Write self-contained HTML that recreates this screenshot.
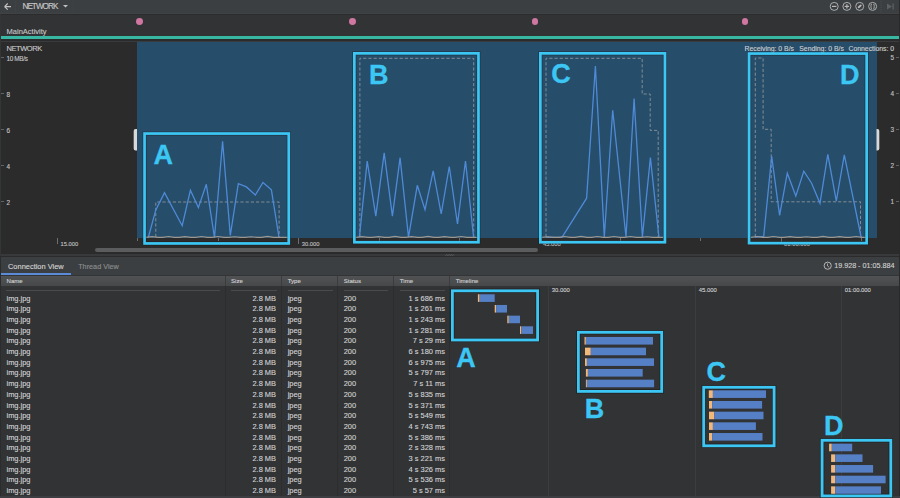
<!DOCTYPE html>
<html><head><meta charset="utf-8"><style>
*{margin:0;padding:0;box-sizing:border-box}
html,body{width:900px;height:498px;overflow:hidden;background:#2b2b2c;font-family:"Liberation Sans",sans-serif;color:#bbbbbb}
.a{position:absolute}
.t{position:absolute;white-space:nowrap;line-height:1;-webkit-text-stroke:0.12px currentColor}
</style></head><body>

<div class="a" style="left:0;top:0;width:900px;height:13.8px;background:#3c3f41"></div>
<div class="a" style="left:0;top:13px;width:900px;height:0.8px;background:#404346"></div>
<div class="a" style="left:0;top:14.8px;width:900px;height:21.2px;background:#313335"></div>
<div class="a" style="left:1px;top:35.5px;width:899px;height:3.2px;background:#38b8a2"></div>
<div class="a" style="left:0;top:38.7px;width:900px;height:3.3px;background:#2a2b2c"></div>
<div class="a" style="left:0;top:41px;width:900px;height:1px;background:#3a3b3c"></div>
<div class="a" style="left:0;top:42px;width:900px;height:196px;background:#2b2b2c"></div>
<div class="a" style="left:137px;top:42px;width:740px;height:196px;background:#264d69"></div>
<div class="a" style="left:0;top:238px;width:900px;height:17px;background:#2b2b2c"></div>
<div class="a" style="left:95px;top:248px;width:443px;height:4.2px;border-radius:2px;background:#5b5c5e"></div>
<div class="a" style="left:0;top:254.2px;width:900px;height:2.3px;background:#37393b"></div>
<div class="a" style="left:0;top:256.5px;width:900px;height:19.3px;background:#3c3f41"></div>
<div class="a" style="left:1px;top:273.3px;width:70px;height:1.8px;background:#5b8ad6"></div>
<div class="a" style="left:0;top:275px;width:900px;height:1px;background:#323436"></div>
<div class="a" style="left:0;top:276px;width:900px;height:9.8px;background:linear-gradient(#505254,#46484a)"></div>
<div class="a" style="left:0;top:285.8px;width:900px;height:1.2px;background:#2c2d2f"></div>
<div class="a" style="left:0;top:286.2px;width:900px;height:212px;background:#313335"></div>
<div class="a" style="left:224.8px;top:276px;width:1px;height:10px;background:#3a3c3e"></div>
<div class="a" style="left:224.8px;top:286px;width:1px;height:212px;background:#2c2d2f"></div>
<div class="a" style="left:281.2px;top:276px;width:1px;height:10px;background:#3a3c3e"></div>
<div class="a" style="left:281.2px;top:286px;width:1px;height:212px;background:#2c2d2f"></div>
<div class="a" style="left:337.0px;top:276px;width:1px;height:10px;background:#3a3c3e"></div>
<div class="a" style="left:337.0px;top:286px;width:1px;height:212px;background:#2c2d2f"></div>
<div class="a" style="left:393.1px;top:276px;width:1px;height:10px;background:#3a3c3e"></div>
<div class="a" style="left:393.1px;top:286px;width:1px;height:212px;background:#2c2d2f"></div>
<div class="a" style="left:449.2px;top:276px;width:1px;height:10px;background:#3a3c3e"></div>
<div class="a" style="left:449.2px;top:286px;width:1px;height:212px;background:#2c2d2f"></div>
<svg class="a" style="left:440px;top:253px" width="20" height="4"><path d="M5.5 2.8 L6.7 1.3 L7.9 2.8 L9.1 1.3 L10.3 2.8 L11.5 1.3 L12.7 2.8 L13.9 1.3" fill="none" stroke="#6b6d70" stroke-width="0.6"/></svg>
<div class="a" style="left:0;top:14px;width:0.9px;height:242px;background:#333537"></div>
<div class="a" style="left:0;top:256px;width:1px;height:242px;background:#2b2c2d"></div>
<div class="a" style="left:898.8px;top:0;width:1.2px;height:498px;background:#2a2a2b"></div>
<div class="t" style="left:22.5px;top:2.6px;font-size:8.2px;letter-spacing:-1.0px;color:#c8c8c8">NETWORK</div>
<svg class="a" style="left:0;top:0" width="900" height="14"><path d="M4.6 6.6 L11 6.6 M4.6 6.6 L7.7 3.5 M4.6 6.6 L7.7 9.7" stroke="#c4c4c4" stroke-width="1.15" fill="none"/><path d="M63 5 L68 5 L65.5 7.5 Z" fill="#c0c0c0"/><line x1="15.5" y1="1" x2="15.5" y2="12" stroke="#4a4c4f" stroke-width="0.5" stroke-dasharray="0.7 0.7"/><line x1="72.8" y1="1" x2="72.8" y2="12" stroke="#4a4c4f" stroke-width="0.5" stroke-dasharray="0.7 0.7"/><g stroke="#b8b8b8" fill="none" stroke-width="0.9"><circle cx="834.2" cy="6.4" r="4"/><circle cx="846.9" cy="6.4" r="4"/><circle cx="859.7" cy="6.4" r="4"/><circle cx="872.6" cy="6.4" r="4"/><line x1="832" y1="6.4" x2="836.4" y2="6.4" stroke-width="1.2"/><line x1="844.7" y1="6.4" x2="849.1" y2="6.4" stroke-width="1.2"/><line x1="846.9" y1="4.2" x2="846.9" y2="8.6" stroke-width="1.2"/><path d="M858.7 7.2 L860.7 5.6" stroke-width="1.9" stroke-linecap="round"/><path d="M871.9 4.4 L871 4.4 L871 8.4 L871.9 8.4 M873.3 4.4 L874.2 4.4 L874.2 8.4 L873.3 8.4" stroke-width="0.8"/></g><line x1="881" y1="1" x2="881" y2="12" stroke="#505254" stroke-width="0.7" stroke-dasharray="1 1"/><path d="M887 3.5 L892 6.5 L887 9.5 Z" fill="#5d5f61"/><rect x="892.5" y="3.5" width="1.3" height="6" fill="#5d5f61"/></svg>
<div class="a" style="left:135.9px;top:17.900000000000002px;width:6.8px;height:6.8px;border-radius:50%;background:#cf77a1"></div>
<div class="a" style="left:349.0px;top:17.900000000000002px;width:6.8px;height:6.8px;border-radius:50%;background:#cf77a1"></div>
<div class="a" style="left:531.6px;top:17.900000000000002px;width:6.8px;height:6.8px;border-radius:50%;background:#cf77a1"></div>
<div class="a" style="left:741.6px;top:17.900000000000002px;width:6.8px;height:6.8px;border-radius:50%;background:#cf77a1"></div>
<div class="t" style="left:6.6px;top:28px;font-size:7.5px;color:#c8c8c8">MainActivity</div>
<div class="t" style="left:6.4px;top:44.8px;font-size:7.5px;letter-spacing:-0.4px;color:#c8c8c8">NETWORK</div>
<div class="t" style="left:6.5px;top:55.699999999999996px;font-size:6.4px;letter-spacing:-0.35px;color:#c4c4c4">10 MB/s</div>
<div class="a" style="left:1px;top:57.099999999999994px;width:3.2px;height:0.9px;background:#616264"></div>
<div class="t" style="left:6.5px;top:91.7px;font-size:6.4px;letter-spacing:-0.35px;color:#c4c4c4">8</div>
<div class="a" style="left:1px;top:93.1px;width:3.2px;height:0.9px;background:#616264"></div>
<div class="t" style="left:6.5px;top:127.70000000000002px;font-size:6.4px;letter-spacing:-0.35px;color:#c4c4c4">6</div>
<div class="a" style="left:1px;top:129.10000000000002px;width:3.2px;height:0.9px;background:#616264"></div>
<div class="t" style="left:6.5px;top:163.70000000000002px;font-size:6.4px;letter-spacing:-0.35px;color:#c4c4c4">4</div>
<div class="a" style="left:1px;top:165.10000000000002px;width:3.2px;height:0.9px;background:#616264"></div>
<div class="t" style="left:6.5px;top:199.70000000000002px;font-size:6.4px;letter-spacing:-0.35px;color:#c4c4c4">2</div>
<div class="a" style="left:1px;top:201.10000000000002px;width:3.2px;height:0.9px;background:#616264"></div>
<div class="t" style="right:6px;top:55.0px;font-size:6.4px;color:#c4c4c4;text-align:right">5</div>
<div class="a" style="left:896px;top:57.099999999999994px;width:3px;height:0.9px;background:#616264"></div>
<div class="t" style="right:6px;top:91.0px;font-size:6.4px;color:#c4c4c4;text-align:right">4</div>
<div class="a" style="left:896px;top:93.1px;width:3px;height:0.9px;background:#616264"></div>
<div class="t" style="right:6px;top:127.00000000000001px;font-size:6.4px;color:#c4c4c4;text-align:right">3</div>
<div class="a" style="left:896px;top:129.10000000000002px;width:3px;height:0.9px;background:#616264"></div>
<div class="t" style="right:6px;top:163.0px;font-size:6.4px;color:#c4c4c4;text-align:right">2</div>
<div class="a" style="left:896px;top:165.10000000000002px;width:3px;height:0.9px;background:#616264"></div>
<div class="t" style="right:6px;top:199.0px;font-size:6.4px;color:#c4c4c4;text-align:right">1</div>
<div class="a" style="left:896px;top:201.10000000000002px;width:3px;height:0.9px;background:#616264"></div>
<div class="t" style="left:744.5px;top:45.8px;font-size:6.85px;color:#d0d0d0">Receiving: 0 B/s</div>
<div class="t" style="left:799.3px;top:45.8px;font-size:6.85px;color:#d0d0d0">Sending: 0 B/s</div>
<div class="t" style="left:848.5px;top:45.8px;font-size:6.85px;color:#d0d0d0">Connections: 0</div>
<div class="a" style="left:137.29999999999998px;top:238px;width:0.8px;height:2.8px;background:#6a6b6d"></div>
<div class="a" style="left:217.70000000000002px;top:238px;width:0.8px;height:2.8px;background:#6a6b6d"></div>
<div class="a" style="left:378.50000000000006px;top:238px;width:0.8px;height:2.8px;background:#6a6b6d"></div>
<div class="a" style="left:458.90000000000003px;top:238px;width:0.8px;height:2.8px;background:#6a6b6d"></div>
<div class="a" style="left:619.7px;top:238px;width:0.8px;height:2.8px;background:#6a6b6d"></div>
<div class="a" style="left:700.1px;top:238px;width:0.8px;height:2.8px;background:#6a6b6d"></div>
<div class="a" style="left:860.9px;top:238px;width:0.8px;height:2.8px;background:#6a6b6d"></div>
<div class="a" style="left:56.9px;top:238px;width:0.8px;height:5.5px;background:#6d6e70"></div>
<div class="t" style="left:60.5px;top:242.1px;font-size:5.8px;color:#c0c0c0">15.000</div>
<div class="a" style="left:298.1px;top:238px;width:0.8px;height:5.5px;background:#6d6e70"></div>
<div class="t" style="left:301.7px;top:242.1px;font-size:5.8px;color:#c0c0c0">30.000</div>
<div class="a" style="left:539.3px;top:238px;width:0.8px;height:5.5px;background:#6d6e70"></div>
<div class="t" style="left:542.9px;top:242.1px;font-size:5.8px;color:#c0c0c0">45.000</div>
<div class="a" style="left:780.4999999999999px;top:238px;width:0.8px;height:5.5px;background:#6d6e70"></div>
<div class="t" style="left:784.0999999999999px;top:242.1px;font-size:5.8px;color:#c0c0c0">01:00.000</div>
<svg class="a" style="left:0;top:0" width="900" height="260"><polyline points="155.8,237.0 155.8,202.0 279.1,202.0 279.1,237.0" fill="none" stroke="#8c949c" stroke-width="0.9" stroke-dasharray="3.2 2"/><polyline points="359.9,237.0 359.9,58.3 473.7,58.3 473.7,237.0" fill="none" stroke="#8c949c" stroke-width="0.9" stroke-dasharray="3.2 2"/><polyline points="546.0,237.0 546.0,58.3 642.2,58.3 642.2,94.0 650.2,94.0 650.2,130.4 658.2,130.4 658.2,237.0" fill="none" stroke="#8c949c" stroke-width="0.9" stroke-dasharray="3.2 2"/><polyline points="755.3,237.0 755.3,58.0 763.1,58.0 763.1,129.3 771.2,129.3 771.2,201.8 860.5,201.8 860.5,237.0" fill="none" stroke="#8c949c" stroke-width="0.9" stroke-dasharray="3.2 2"/><polyline points="148.3,237.5 155.8,209.9 164.5,192.6 182.2,225.7 190.4,190.3 198.4,207.6 206.3,184.3 214.5,237.5 222.6,141.2 230.3,235.5 238.3,183.6 246.4,186.9 255.3,195.1 263.0,182.5 271.4,189.8 278.9,237.0" fill="none" stroke="#4f8ad8" stroke-width="1.3" stroke-linejoin="miter"/><polyline points="359.4,237.2 367.2,161.0 375.8,216.2 384.2,152.8 392.4,216.2 400.1,157.7 408.5,237.2 417.3,185.3 425.0,209.6 433.2,170.9 441.2,214.0 449.3,166.5 457.5,224.0 465.5,161.0 473.6,237.2" fill="none" stroke="#4f8ad8" stroke-width="1.3" stroke-linejoin="miter"/><polyline points="546.0,237.3 562.0,237.3 586.6,198.2 595.4,66.0 604.3,237.0 612.7,110.3 626.0,237.0 634.1,98.6 642.4,237.0 650.4,157.6 658.9,237.0" fill="none" stroke="#4f8ad8" stroke-width="1.3" stroke-linejoin="miter"/><polyline points="755.0,237.0 763.7,236.3 771.7,156.3 779.6,215.4 787.3,173.2 795.8,196.1 803.8,171.2 811.6,183.2 820.0,203.3 827.8,154.3 836.3,201.2 844.3,154.8 861.2,237.5" fill="none" stroke="#4f8ad8" stroke-width="1.3" stroke-linejoin="miter"/><polyline points="146.0,237.4 152.0,236.6 158.0,237.4 162.5,237.4 168.5,236.5 174.5,237.4 179.0,237.4 185.0,236.6 191.0,237.4 195.5,237.4 201.5,236.5 207.5,237.4 212.0,237.4 218.0,236.5 224.0,237.4 228.5,237.4 234.5,236.7 240.5,237.4 245.0,237.4 251.0,236.7 257.0,237.4 261.5,237.4 267.5,236.4 273.5,237.4 288.0,237.4" fill="none" stroke="#9d9892" stroke-width="1.1"/><polyline points="356.0,237.4 362.0,236.6 368.0,237.4 372.5,237.4 378.5,236.6 384.5,237.4 389.0,237.4 395.0,236.4 401.0,237.4 405.5,237.4 411.5,236.6 417.5,237.4 422.0,237.4 428.0,236.4 434.0,237.4 438.5,237.4 444.5,236.6 450.5,237.4 455.0,237.4 461.0,236.5 467.0,237.4 477.0,237.4" fill="none" stroke="#9d9892" stroke-width="1.1"/><polyline points="542.0,237.4 548.0,236.7 554.0,237.4 558.5,237.4 564.5,236.5 570.5,237.4 575.0,237.4 581.0,236.4 587.0,237.4 591.5,237.4 597.5,236.5 603.5,237.4 608.0,237.4 614.0,236.5 620.0,237.4 624.5,237.4 630.5,236.5 636.5,237.4 641.0,237.4 647.0,236.7 653.0,237.4 663.0,237.4" fill="none" stroke="#9d9892" stroke-width="1.1"/><polyline points="751.0,237.4 757.0,236.5 763.0,237.4 767.5,237.4 773.5,236.5 779.5,237.4 784.0,237.4 790.0,236.6 796.0,237.4 800.5,237.4 806.5,236.7 812.5,237.4 817.0,237.4 823.0,236.4 829.0,237.4 833.5,237.4 839.5,236.6 845.5,237.4 850.0,237.4 856.0,236.5 862.0,237.4 866.0,237.4" fill="none" stroke="#9d9892" stroke-width="1.1"/><path d="M137 129 L135.5 129 Q133.7 129 133.7 131 L133.7 148.5 Q133.7 150.5 135.5 150.5 L137 150.5 Z" fill="#d8d8d8"/><path d="M876.5 129 L877.5 129 Q879.3 129 879.3 131 L879.3 148.5 Q879.3 150.5 877.5 150.5 L876.5 150.5 Z" fill="#d8d8d8"/><rect x="144.54999999999998" y="133.54999999999998" width="144.20000000000005" height="109.90000000000002" fill="none" stroke="rgba(25,22,22,0.4)" stroke-width="4.1"/><rect x="144.54999999999998" y="133.54999999999998" width="144.20000000000005" height="109.90000000000002" fill="none" stroke="#3cc6f4" stroke-width="2.7"/><rect x="354.35" y="53.35" width="124.10000000000001" height="188.9" fill="none" stroke="rgba(25,22,22,0.4)" stroke-width="4.1"/><rect x="354.35" y="53.35" width="124.10000000000001" height="188.9" fill="none" stroke="#3cc6f4" stroke-width="2.7"/><rect x="540.35" y="53.35" width="124.59999999999995" height="188.9" fill="none" stroke="rgba(25,22,22,0.4)" stroke-width="4.1"/><rect x="540.35" y="53.35" width="124.59999999999995" height="188.9" fill="none" stroke="#3cc6f4" stroke-width="2.7"/><rect x="749.0500000000001" y="53.550000000000004" width="117.59999999999995" height="189.60000000000002" fill="none" stroke="rgba(25,22,22,0.4)" stroke-width="4.1"/><rect x="749.0500000000001" y="53.550000000000004" width="117.59999999999995" height="189.60000000000002" fill="none" stroke="#3cc6f4" stroke-width="2.7"/></svg>
<div class="t" style="left:153.4px;top:142.4px;font-size:27px;font-weight:bold;-webkit-text-stroke:0.3px #3cc6f4;color:#3cc6f4">A</div>
<div class="t" style="left:369.1px;top:61.89999999999999px;font-size:27px;font-weight:bold;-webkit-text-stroke:0.3px #3cc6f4;color:#3cc6f4">B</div>
<div class="t" style="left:551.2px;top:61.3px;font-size:27px;font-weight:bold;-webkit-text-stroke:0.3px #3cc6f4;color:#3cc6f4">C</div>
<div class="t" style="left:840.0px;top:61.8px;font-size:27px;font-weight:bold;-webkit-text-stroke:0.3px #3cc6f4;color:#3cc6f4">D</div>
<div class="t" style="left:8px;top:262.5px;font-size:7.45px;color:#d4d4d4">Connection View</div>
<div class="t" style="left:78.2px;top:262.5px;font-size:7.25px;color:#8d8f91">Thread View</div>
<svg class="a" style="left:0;top:256" width="900" height="20"><circle cx="827.7" cy="9.7" r="3.6" fill="none" stroke="#c0c0c0" stroke-width="0.9"/><path d="M827.5 7.5 L827.5 9.9 L829.2 11.4" fill="none" stroke="#c0c0c0" stroke-width="0.8"/></svg>
<div class="t" style="right:5.5px;top:262.3px;font-size:7.2px;color:#d0d0d0">19.928 - 01:05.884</div>
<div class="t" style="left:6.5px;top:278.0px;font-size:6.1px;color:#d2d2d2">Name</div>
<div class="t" style="left:231px;top:278.0px;font-size:6.1px;color:#d2d2d2">Size</div>
<div class="t" style="left:287.7px;top:278.0px;font-size:6.1px;color:#d2d2d2">Type</div>
<div class="t" style="left:343.7px;top:278.0px;font-size:6.1px;color:#d2d2d2">Status</div>
<div class="t" style="left:399.8px;top:278.0px;font-size:6.1px;color:#d2d2d2">Time</div>
<div class="t" style="left:455.7px;top:278.0px;font-size:6.1px;color:#d2d2d2">Timeline</div>
<div class="a" style="left:6px;top:289.8px;width:214px;height:0.8px;background:#4a4b4d"></div>
<div class="a" style="left:231px;top:289.8px;width:45.5px;height:0.8px;background:#4a4b4d"></div>
<div class="a" style="left:287.7px;top:289.8px;width:45.30000000000001px;height:0.8px;background:#4a4b4d"></div>
<div class="a" style="left:343.7px;top:289.8px;width:44.80000000000001px;height:0.8px;background:#4a4b4d"></div>
<div class="a" style="left:399.8px;top:289.8px;width:45.099999999999966px;height:0.8px;background:#4a4b4d"></div>
<div class="t" style="left:6.5px;top:294.79999999999995px;font-size:7.45px;color:#d2d2d2">img.jpg</div>
<div class="t" style="left:220px;width:56px;text-align:right;top:294.79999999999995px;font-size:7.45px;color:#d2d2d2">2.8 MB</div>
<div class="t" style="left:287.7px;top:294.79999999999995px;font-size:7.45px;color:#d2d2d2">jpeg</div>
<div class="t" style="left:343.7px;top:294.79999999999995px;font-size:7.45px;color:#d2d2d2">200</div>
<div class="t" style="left:380px;width:65px;text-align:right;top:294.79999999999995px;font-size:7.45px;color:#d2d2d2">1 s 686 ms</div>
<div class="t" style="left:6.5px;top:305.46999999999997px;font-size:7.45px;color:#d2d2d2">img.jpg</div>
<div class="t" style="left:220px;width:56px;text-align:right;top:305.46999999999997px;font-size:7.45px;color:#d2d2d2">2.8 MB</div>
<div class="t" style="left:287.7px;top:305.46999999999997px;font-size:7.45px;color:#d2d2d2">jpeg</div>
<div class="t" style="left:343.7px;top:305.46999999999997px;font-size:7.45px;color:#d2d2d2">200</div>
<div class="t" style="left:380px;width:65px;text-align:right;top:305.46999999999997px;font-size:7.45px;color:#d2d2d2">1 s 261 ms</div>
<div class="t" style="left:6.5px;top:316.13999999999993px;font-size:7.45px;color:#d2d2d2">img.jpg</div>
<div class="t" style="left:220px;width:56px;text-align:right;top:316.13999999999993px;font-size:7.45px;color:#d2d2d2">2.8 MB</div>
<div class="t" style="left:287.7px;top:316.13999999999993px;font-size:7.45px;color:#d2d2d2">jpeg</div>
<div class="t" style="left:343.7px;top:316.13999999999993px;font-size:7.45px;color:#d2d2d2">200</div>
<div class="t" style="left:380px;width:65px;text-align:right;top:316.13999999999993px;font-size:7.45px;color:#d2d2d2">1 s 243 ms</div>
<div class="t" style="left:6.5px;top:326.80999999999995px;font-size:7.45px;color:#d2d2d2">img.jpg</div>
<div class="t" style="left:220px;width:56px;text-align:right;top:326.80999999999995px;font-size:7.45px;color:#d2d2d2">2.8 MB</div>
<div class="t" style="left:287.7px;top:326.80999999999995px;font-size:7.45px;color:#d2d2d2">jpeg</div>
<div class="t" style="left:343.7px;top:326.80999999999995px;font-size:7.45px;color:#d2d2d2">200</div>
<div class="t" style="left:380px;width:65px;text-align:right;top:326.80999999999995px;font-size:7.45px;color:#d2d2d2">1 s 281 ms</div>
<div class="t" style="left:6.5px;top:337.47999999999996px;font-size:7.45px;color:#d2d2d2">img.jpg</div>
<div class="t" style="left:220px;width:56px;text-align:right;top:337.47999999999996px;font-size:7.45px;color:#d2d2d2">2.8 MB</div>
<div class="t" style="left:287.7px;top:337.47999999999996px;font-size:7.45px;color:#d2d2d2">jpeg</div>
<div class="t" style="left:343.7px;top:337.47999999999996px;font-size:7.45px;color:#d2d2d2">200</div>
<div class="t" style="left:380px;width:65px;text-align:right;top:337.47999999999996px;font-size:7.45px;color:#d2d2d2">7 s 29 ms</div>
<div class="t" style="left:6.5px;top:348.15px;font-size:7.45px;color:#d2d2d2">img.jpg</div>
<div class="t" style="left:220px;width:56px;text-align:right;top:348.15px;font-size:7.45px;color:#d2d2d2">2.8 MB</div>
<div class="t" style="left:287.7px;top:348.15px;font-size:7.45px;color:#d2d2d2">jpeg</div>
<div class="t" style="left:343.7px;top:348.15px;font-size:7.45px;color:#d2d2d2">200</div>
<div class="t" style="left:380px;width:65px;text-align:right;top:348.15px;font-size:7.45px;color:#d2d2d2">6 s 180 ms</div>
<div class="t" style="left:6.5px;top:358.81999999999994px;font-size:7.45px;color:#d2d2d2">img.jpg</div>
<div class="t" style="left:220px;width:56px;text-align:right;top:358.81999999999994px;font-size:7.45px;color:#d2d2d2">2.8 MB</div>
<div class="t" style="left:287.7px;top:358.81999999999994px;font-size:7.45px;color:#d2d2d2">jpeg</div>
<div class="t" style="left:343.7px;top:358.81999999999994px;font-size:7.45px;color:#d2d2d2">200</div>
<div class="t" style="left:380px;width:65px;text-align:right;top:358.81999999999994px;font-size:7.45px;color:#d2d2d2">6 s 975 ms</div>
<div class="t" style="left:6.5px;top:369.48999999999995px;font-size:7.45px;color:#d2d2d2">img.jpg</div>
<div class="t" style="left:220px;width:56px;text-align:right;top:369.48999999999995px;font-size:7.45px;color:#d2d2d2">2.8 MB</div>
<div class="t" style="left:287.7px;top:369.48999999999995px;font-size:7.45px;color:#d2d2d2">jpeg</div>
<div class="t" style="left:343.7px;top:369.48999999999995px;font-size:7.45px;color:#d2d2d2">200</div>
<div class="t" style="left:380px;width:65px;text-align:right;top:369.48999999999995px;font-size:7.45px;color:#d2d2d2">5 s 797 ms</div>
<div class="t" style="left:6.5px;top:380.15999999999997px;font-size:7.45px;color:#d2d2d2">img.jpg</div>
<div class="t" style="left:220px;width:56px;text-align:right;top:380.15999999999997px;font-size:7.45px;color:#d2d2d2">2.8 MB</div>
<div class="t" style="left:287.7px;top:380.15999999999997px;font-size:7.45px;color:#d2d2d2">jpeg</div>
<div class="t" style="left:343.7px;top:380.15999999999997px;font-size:7.45px;color:#d2d2d2">200</div>
<div class="t" style="left:380px;width:65px;text-align:right;top:380.15999999999997px;font-size:7.45px;color:#d2d2d2">7 s 11 ms</div>
<div class="t" style="left:6.5px;top:390.8299999999999px;font-size:7.45px;color:#d2d2d2">img.jpg</div>
<div class="t" style="left:220px;width:56px;text-align:right;top:390.8299999999999px;font-size:7.45px;color:#d2d2d2">2.8 MB</div>
<div class="t" style="left:287.7px;top:390.8299999999999px;font-size:7.45px;color:#d2d2d2">jpeg</div>
<div class="t" style="left:343.7px;top:390.8299999999999px;font-size:7.45px;color:#d2d2d2">200</div>
<div class="t" style="left:380px;width:65px;text-align:right;top:390.8299999999999px;font-size:7.45px;color:#d2d2d2">5 s 835 ms</div>
<div class="t" style="left:6.5px;top:401.49999999999994px;font-size:7.45px;color:#d2d2d2">img.jpg</div>
<div class="t" style="left:220px;width:56px;text-align:right;top:401.49999999999994px;font-size:7.45px;color:#d2d2d2">2.8 MB</div>
<div class="t" style="left:287.7px;top:401.49999999999994px;font-size:7.45px;color:#d2d2d2">jpeg</div>
<div class="t" style="left:343.7px;top:401.49999999999994px;font-size:7.45px;color:#d2d2d2">200</div>
<div class="t" style="left:380px;width:65px;text-align:right;top:401.49999999999994px;font-size:7.45px;color:#d2d2d2">5 s 371 ms</div>
<div class="t" style="left:6.5px;top:412.16999999999996px;font-size:7.45px;color:#d2d2d2">img.jpg</div>
<div class="t" style="left:220px;width:56px;text-align:right;top:412.16999999999996px;font-size:7.45px;color:#d2d2d2">2.8 MB</div>
<div class="t" style="left:287.7px;top:412.16999999999996px;font-size:7.45px;color:#d2d2d2">jpeg</div>
<div class="t" style="left:343.7px;top:412.16999999999996px;font-size:7.45px;color:#d2d2d2">200</div>
<div class="t" style="left:380px;width:65px;text-align:right;top:412.16999999999996px;font-size:7.45px;color:#d2d2d2">5 s 549 ms</div>
<div class="t" style="left:6.5px;top:422.8399999999999px;font-size:7.45px;color:#d2d2d2">img.jpg</div>
<div class="t" style="left:220px;width:56px;text-align:right;top:422.8399999999999px;font-size:7.45px;color:#d2d2d2">2.8 MB</div>
<div class="t" style="left:287.7px;top:422.8399999999999px;font-size:7.45px;color:#d2d2d2">jpeg</div>
<div class="t" style="left:343.7px;top:422.8399999999999px;font-size:7.45px;color:#d2d2d2">200</div>
<div class="t" style="left:380px;width:65px;text-align:right;top:422.8399999999999px;font-size:7.45px;color:#d2d2d2">4 s 743 ms</div>
<div class="t" style="left:6.5px;top:433.51px;font-size:7.45px;color:#d2d2d2">img.jpg</div>
<div class="t" style="left:220px;width:56px;text-align:right;top:433.51px;font-size:7.45px;color:#d2d2d2">2.8 MB</div>
<div class="t" style="left:287.7px;top:433.51px;font-size:7.45px;color:#d2d2d2">jpeg</div>
<div class="t" style="left:343.7px;top:433.51px;font-size:7.45px;color:#d2d2d2">200</div>
<div class="t" style="left:380px;width:65px;text-align:right;top:433.51px;font-size:7.45px;color:#d2d2d2">5 s 386 ms</div>
<div class="t" style="left:6.5px;top:444.17999999999995px;font-size:7.45px;color:#d2d2d2">img.jpg</div>
<div class="t" style="left:220px;width:56px;text-align:right;top:444.17999999999995px;font-size:7.45px;color:#d2d2d2">2.8 MB</div>
<div class="t" style="left:287.7px;top:444.17999999999995px;font-size:7.45px;color:#d2d2d2">jpeg</div>
<div class="t" style="left:343.7px;top:444.17999999999995px;font-size:7.45px;color:#d2d2d2">200</div>
<div class="t" style="left:380px;width:65px;text-align:right;top:444.17999999999995px;font-size:7.45px;color:#d2d2d2">2 s 328 ms</div>
<div class="t" style="left:6.5px;top:454.84999999999997px;font-size:7.45px;color:#d2d2d2">img.jpg</div>
<div class="t" style="left:220px;width:56px;text-align:right;top:454.84999999999997px;font-size:7.45px;color:#d2d2d2">2.8 MB</div>
<div class="t" style="left:287.7px;top:454.84999999999997px;font-size:7.45px;color:#d2d2d2">jpeg</div>
<div class="t" style="left:343.7px;top:454.84999999999997px;font-size:7.45px;color:#d2d2d2">200</div>
<div class="t" style="left:380px;width:65px;text-align:right;top:454.84999999999997px;font-size:7.45px;color:#d2d2d2">3 s 221 ms</div>
<div class="t" style="left:6.5px;top:465.52px;font-size:7.45px;color:#d2d2d2">img.jpg</div>
<div class="t" style="left:220px;width:56px;text-align:right;top:465.52px;font-size:7.45px;color:#d2d2d2">2.8 MB</div>
<div class="t" style="left:287.7px;top:465.52px;font-size:7.45px;color:#d2d2d2">jpeg</div>
<div class="t" style="left:343.7px;top:465.52px;font-size:7.45px;color:#d2d2d2">200</div>
<div class="t" style="left:380px;width:65px;text-align:right;top:465.52px;font-size:7.45px;color:#d2d2d2">4 s 326 ms</div>
<div class="t" style="left:6.5px;top:476.18999999999994px;font-size:7.45px;color:#d2d2d2">img.jpg</div>
<div class="t" style="left:220px;width:56px;text-align:right;top:476.18999999999994px;font-size:7.45px;color:#d2d2d2">2.8 MB</div>
<div class="t" style="left:287.7px;top:476.18999999999994px;font-size:7.45px;color:#d2d2d2">jpeg</div>
<div class="t" style="left:343.7px;top:476.18999999999994px;font-size:7.45px;color:#d2d2d2">200</div>
<div class="t" style="left:380px;width:65px;text-align:right;top:476.18999999999994px;font-size:7.45px;color:#d2d2d2">5 s 536 ms</div>
<div class="t" style="left:6.5px;top:486.85999999999996px;font-size:7.45px;color:#d2d2d2">img.jpg</div>
<div class="t" style="left:220px;width:56px;text-align:right;top:486.85999999999996px;font-size:7.45px;color:#d2d2d2">2.8 MB</div>
<div class="t" style="left:287.7px;top:486.85999999999996px;font-size:7.45px;color:#d2d2d2">jpeg</div>
<div class="t" style="left:343.7px;top:486.85999999999996px;font-size:7.45px;color:#d2d2d2">200</div>
<div class="t" style="left:380px;width:65px;text-align:right;top:486.85999999999996px;font-size:7.45px;color:#d2d2d2">5 s 57 ms</div>
<div class="a" style="left:548.2px;top:286.2px;width:1px;height:212px;background:#3b3d40"></div>
<div class="t" style="left:551.7px;top:287.6px;font-size:5.9px;color:#d2d2d2">30.000</div>
<div class="a" style="left:695.2px;top:286.2px;width:1px;height:212px;background:#3b3d40"></div>
<div class="t" style="left:698.7px;top:287.6px;font-size:5.9px;color:#d2d2d2">45.000</div>
<div class="a" style="left:841.2px;top:286.2px;width:1px;height:212px;background:#3b3d40"></div>
<div class="t" style="left:844.7px;top:287.6px;font-size:5.9px;color:#d2d2d2">01:00.000</div>
<div class="a" style="left:0;top:495.5px;width:900px;height:2.5px;background:#3c3e41"></div>
<svg class="a" style="left:0;top:0" width="900" height="498"><rect x="477.9" y="294.30" width="1.70" height="7.6" fill="#f2b77a"/><rect x="479.6" y="294.30" width="15.10" height="7.6" fill="#5680c6"/><rect x="494.7" y="304.97" width="1.50" height="7.6" fill="#f2b77a"/><rect x="496.2" y="304.97" width="10.80" height="7.6" fill="#5680c6"/><rect x="507.3" y="315.64" width="1.50" height="7.6" fill="#f2b77a"/><rect x="508.8" y="315.64" width="11.20" height="7.6" fill="#5680c6"/><rect x="520" y="326.31" width="1.30" height="7.6" fill="#f2b77a"/><rect x="521.3" y="326.31" width="11.70" height="7.6" fill="#5680c6"/><rect x="584.5" y="336.98" width="1.40" height="7.6" fill="#f2b77a"/><rect x="585.9" y="336.98" width="67.10" height="7.6" fill="#5680c6"/><rect x="585" y="347.65" width="5.80" height="7.6" fill="#f2b77a"/><rect x="590.8" y="347.65" width="55.20" height="7.6" fill="#5680c6"/><rect x="585" y="358.32" width="1.90" height="7.6" fill="#f2b77a"/><rect x="586.9" y="358.32" width="67.10" height="7.6" fill="#5680c6"/><rect x="585.9" y="368.99" width="2.00" height="7.6" fill="#f2b77a"/><rect x="587.9" y="368.99" width="54.80" height="7.6" fill="#5680c6"/><rect x="585.9" y="379.66" width="1.00" height="7.6" fill="#f2b77a"/><rect x="586.9" y="379.66" width="67.20" height="7.6" fill="#5680c6"/><rect x="708.8" y="390.33" width="4.10" height="7.6" fill="#f2b77a"/><rect x="712.9" y="390.33" width="53.10" height="7.6" fill="#5680c6"/><rect x="709" y="401.00" width="3.20" height="7.6" fill="#f2b77a"/><rect x="712.2" y="401.00" width="49.90" height="7.6" fill="#5680c6"/><rect x="709" y="411.67" width="5.30" height="7.6" fill="#f2b77a"/><rect x="714.3" y="411.67" width="49.20" height="7.6" fill="#5680c6"/><rect x="709" y="422.34" width="3.90" height="7.6" fill="#f2b77a"/><rect x="712.9" y="422.34" width="43.00" height="7.6" fill="#5680c6"/><rect x="709" y="433.01" width="3.20" height="7.6" fill="#f2b77a"/><rect x="712.2" y="433.01" width="50.30" height="7.6" fill="#5680c6"/><rect x="829.1" y="443.68" width="2.70" height="7.6" fill="#f2b77a"/><rect x="831.8" y="443.68" width="20.40" height="7.6" fill="#5680c6"/><rect x="831.1" y="454.35" width="4.10" height="7.6" fill="#f2b77a"/><rect x="835.2" y="454.35" width="27.30" height="7.6" fill="#5680c6"/><rect x="831.1" y="465.02" width="4.10" height="7.6" fill="#f2b77a"/><rect x="835.2" y="465.02" width="37.90" height="7.6" fill="#5680c6"/><rect x="831.1" y="475.69" width="4.10" height="7.6" fill="#f2b77a"/><rect x="835.2" y="475.69" width="50.40" height="7.6" fill="#5680c6"/><rect x="831.1" y="486.36" width="4.10" height="7.6" fill="#f2b77a"/><rect x="835.2" y="486.36" width="45.80" height="7.6" fill="#5680c6"/><rect x="452.4" y="290.79999999999995" width="85.2" height="49.2" fill="none" stroke="rgba(25,22,22,0.55)" stroke-width="4.4"/><rect x="452.4" y="290.79999999999995" width="85.2" height="49.2" fill="none" stroke="#3cc6f4" stroke-width="2.8"/><rect x="578.4" y="332.29999999999995" width="83.30000000000003" height="59.10000000000004" fill="none" stroke="rgba(25,22,22,0.55)" stroke-width="4.4"/><rect x="578.4" y="332.29999999999995" width="83.30000000000003" height="59.10000000000004" fill="none" stroke="#3cc6f4" stroke-width="2.8"/><rect x="703.6999999999999" y="387.29999999999995" width="70.40000000000005" height="58.500000000000014" fill="none" stroke="rgba(25,22,22,0.55)" stroke-width="4.4"/><rect x="703.6999999999999" y="387.29999999999995" width="70.40000000000005" height="58.500000000000014" fill="none" stroke="#3cc6f4" stroke-width="2.8"/><rect x="822.1" y="440.29999999999995" width="68.7" height="55.60000000000004" fill="none" stroke="rgba(25,22,22,0.55)" stroke-width="4.4"/><rect x="822.1" y="440.29999999999995" width="68.7" height="55.60000000000004" fill="none" stroke="#3cc6f4" stroke-width="2.8"/></svg>
<div class="t" style="left:456.2px;top:345.2px;font-size:27px;font-weight:bold;-webkit-text-stroke:0.3px #3cc6f4;color:#3cc6f4">A</div>
<div class="t" style="left:584.7px;top:396.2px;font-size:27px;font-weight:bold;-webkit-text-stroke:0.3px #3cc6f4;color:#3cc6f4">B</div>
<div class="t" style="left:706.6px;top:359.1px;font-size:27px;font-weight:bold;-webkit-text-stroke:0.3px #3cc6f4;color:#3cc6f4">C</div>
<div class="t" style="left:824.0px;top:413.2px;font-size:27px;font-weight:bold;-webkit-text-stroke:0.3px #3cc6f4;color:#3cc6f4">D</div>
</body></html>
